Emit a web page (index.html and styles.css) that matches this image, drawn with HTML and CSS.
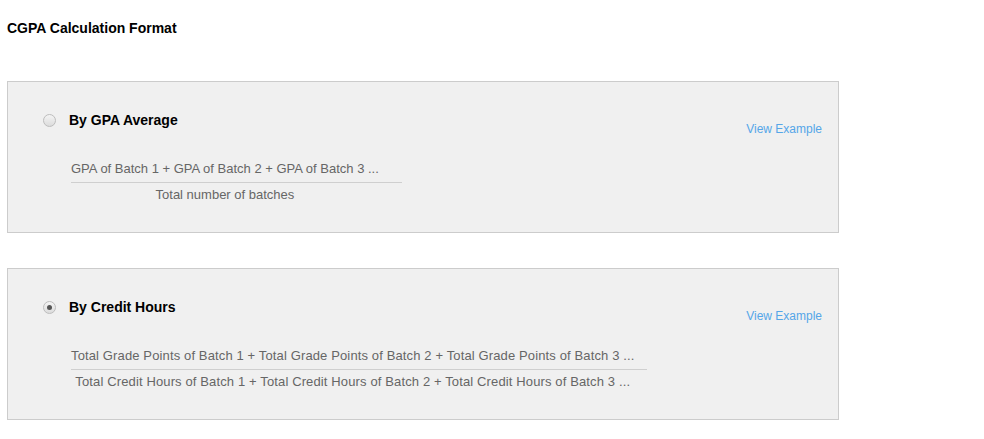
FILE: index.html
```html
<!DOCTYPE html>
<html>
<head>
<meta charset="utf-8">
<link rel="stylesheet" href="styles.css">
</head>
<body>
<div class="page">
  <h1 class="title">CGPA Calculation Format</h1>
  <div class="box">
    <div class="head">
      <label class="option"><span class="radio"></span><span class="label">By GPA Average</span></label>
      <a class="link" href="#">View Example</a>
    </div>
    <div class="fraction">
      <div class="numer">GPA of Batch 1 + GPA of Batch 2 + GPA of Batch 3 ...</div>
      <div class="denom">Total number of batches</div>
    </div>
  </div>
  <div class="box">
    <div class="head">
      <label class="option"><span class="radio checked"></span><span class="label">By Credit Hours</span></label>
      <a class="link" href="#">View Example</a>
    </div>
    <div class="fraction wide">
      <div class="numer">Total Grade Points of Batch 1 + Total Grade Points of Batch 2 + Total Grade Points of Batch 3 ...</div>
      <div class="denom">Total Credit Hours of Batch 1 + Total Credit Hours of Batch 2 + Total Credit Hours of Batch 3 ...</div>
    </div>
  </div>
</div>
</body>
</html>
```
FILE: styles.css
```css
html, body {
  margin: 0;
  padding: 0;
  background: #fff;
}
body {
  font-family: "Liberation Sans", Arial, sans-serif;
  color: #000;
}
.page {
  padding: 0 7px;
}
.title {
  margin: 0;
  padding-top: 20px;
  font-size: 14px;
  line-height: 16px;
  font-weight: bold;
}
.box {
  width: 815px;
  margin-top: 45px;
  border: 1px solid #cccccc;
  background: #f0f0f0;
  padding: 28px 15px 28px 0;
}
.box + .box {
  margin-top: 35px;
}
.head {
  display: flex;
  justify-content: space-between;
  align-items: flex-start;
  height: 20px;
}
.option {
  display: flex;
  align-items: center;
  height: 20px;
  padding-left: 35px;
}
.radio {
  width: 11px;
  height: 11px;
  border-radius: 50%;
  border: 1px solid #bdbdbd;
  background: linear-gradient(#f4f4f4, #dcdcdc);
  margin-right: 13px;
  position: relative;
}
.radio.checked::after {
  content: "";
  position: absolute;
  left: 3px;
  top: 3px;
  width: 5px;
  height: 5px;
  border-radius: 50%;
  background: #555;
}
.label {
  font-size: 14px;
  font-weight: bold;
}
.link {
  margin-top: 11px;
  margin-right: 1px;
  font-size: 12px;
  line-height: 16px;
  color: #55a6e8;
  text-decoration: none;
}
.fraction {
  display: inline-block;
  margin-left: 63px;
  margin-top: 30px;
  font-size: 13px;
  line-height: 18px;
  color: #666;
}
.fraction.wide {
  letter-spacing: 0.13px;
}
.numer {
  padding-right: 23px;
  padding-bottom: 4px;
  border-bottom: 1px solid #cfcfcf;
}
.fraction.wide .numer {
  padding-right: 12px;
}
.denom {
  padding-top: 3px;
  padding-right: 23px;
  text-align: center;
}
.fraction.wide .denom {
  padding-right: 12px;
}
```
